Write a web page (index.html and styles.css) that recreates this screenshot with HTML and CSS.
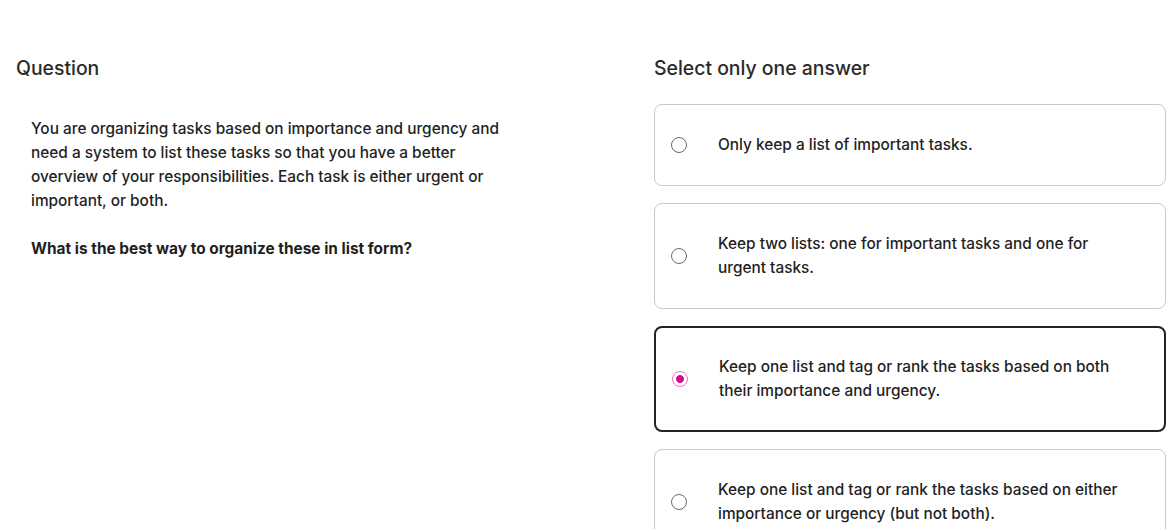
FILE: index.html
```html
<!DOCTYPE html>
<html lang="en">
<head>
<meta charset="utf-8">
<title>Question</title>
<link rel="stylesheet" href="styles.css">
</head>
<body>
<main class="quiz">
  <section class="question">
    <h2 class="label">Question</h2>
    <div class="prompt">
      <p>You are organizing tasks based on importance and urgency and need a system to list these tasks so that you have a better overview of your responsibilities. Each task is either urgent or important, or both.</p>
      <p class="ask">What is the best way to organize these in list form?</p>
    </div>
  </section>
  <section class="answers">
    <h2 class="label">Select only one answer</h2>
    <ul class="options">
      <li class="option"><span class="radio"></span><span class="text">Only keep a list of important tasks.</span></li>
      <li class="option"><span class="radio"></span><span class="text">Keep two lists: one for important tasks and one for urgent tasks.</span></li>
      <li class="option selected"><span class="radio"></span><span class="text">Keep one list and tag or rank the tasks based on both their importance and urgency.</span></li>
      <li class="option"><span class="radio"></span><span class="text">Keep one list and tag or rank the tasks based on either importance or urgency (but not both).</span></li>
    </ul>
  </section>
</main>
</body>
</html>
```
FILE: styles.css
```css
* { box-sizing: border-box; }
html, body { margin: 0; padding: 0; background: #fff; }
body {
  font-family: Inter, "Noto Sans", "Liberation Sans", sans-serif;
  color: #1f1f1f;
  overflow: hidden;
}
.quiz {
  display: grid;
  grid-template-columns: 638px 512px;
  padding: 56px 0 0 16px;
}
.label {
  margin: 0;
  font-size: 19.4px;
  line-height: 24px;
  font-weight: 500;
  color: #2b2b2b;
}
.prompt {
  padding: 37px 0 0 15px;
  max-width: 500px;
  font-size: 15.4px;
  line-height: 24px;
  font-weight: 500;
}
.prompt p { margin: 0 0 24px; }
.prompt .ask { font-weight: 700; }
.options {
  list-style: none;
  margin: 24px 0 0;
  padding: 0;
  display: flex;
  flex-direction: column;
  gap: 17px;
}
.option {
  display: flex;
  align-items: center;
  gap: 31px;
  border: 1px solid #c9c9c9;
  border-radius: 8px;
  padding: 28px 36px 28px 16px;
  font-size: 15.4px;
  line-height: 24px;
  font-weight: 500;
}
.option.selected {
  border: 2px solid #222;
  padding: 27px 35px 27px 16px;
}
.radio {
  flex: none;
  width: 16px;
  height: 16px;
  border: 1.5px solid #6a6a6a;
  border-radius: 50%;
}
.selected .radio {
  border-color: #ec6cc6;
  background: radial-gradient(circle, #d60b92 0 3.6px, #fff 4.2px);
}
.text { display: block; }
```
